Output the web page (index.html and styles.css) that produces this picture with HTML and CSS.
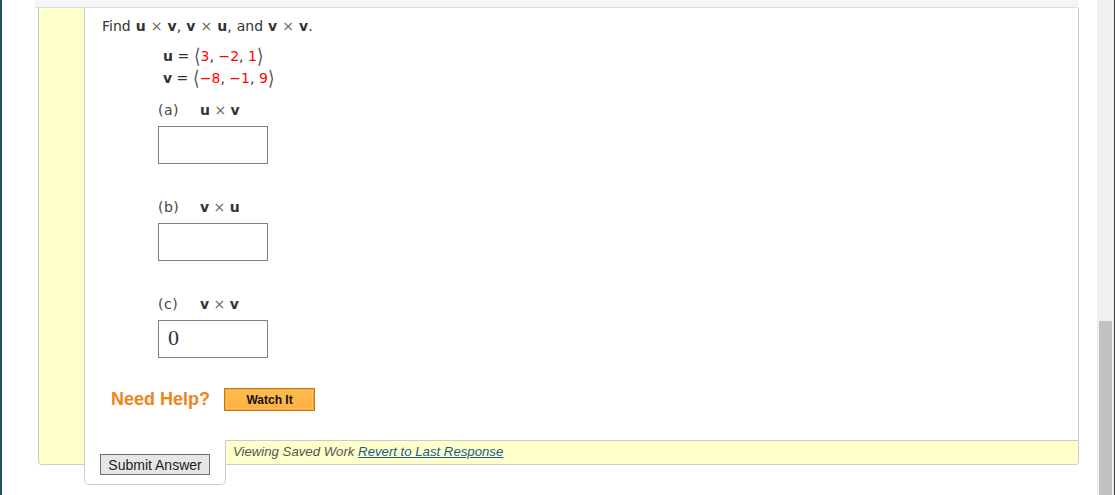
FILE: index.html
```html
<!DOCTYPE html>
<html>
<head>
<meta charset="utf-8">
<link rel="stylesheet" href="styles.css">
</head>
<body>
<div class="edge"></div>
<div class="page">
  <div class="prev-question"></div>
  <div class="question">
    <div class="gutter"></div>
    <div class="main">
      <div class="body">
        <p class="intro">Find <b>u</b> <span class="times">×</span> <b>v</b>, <b>v</b> <span class="times">×</span> <b>u</b>, and <b>v</b> <span class="times">×</span> <b>v</b>.</p>
        <div class="vectors">
          <div class="vec"><b>u</b> = <span class="ang">⟨</span><span class="num">3</span>, <span class="num">−2</span>, <span class="num">1</span><span class="ang">⟩</span></div>
          <div class="vec"><b>v</b> = <span class="ang">⟨</span><span class="num">−8</span>, <span class="num">−1</span>, <span class="num">9</span><span class="ang">⟩</span></div>
        </div>
        <div class="part">
          <div class="part-label"><span class="letter">(a)</span><span class="expr"><b>u</b> <span class="times">×</span> <b>v</b></span></div>
          <div class="answer"></div>
        </div>
        <div class="part">
          <div class="part-label"><span class="letter">(b)</span><span class="expr"><b>v</b> <span class="times">×</span> <b>u</b></span></div>
          <div class="answer"></div>
        </div>
        <div class="part part-last">
          <div class="part-label"><span class="letter">(c)</span><span class="expr"><b>v</b> <span class="times">×</span> <b>v</b></span></div>
          <div class="answer"><span class="value">0</span></div>
        </div>
        <div class="help">
          <span class="help-title">Need Help?</span>
          <span class="watch">Watch It</span>
        </div>
      </div>
      <div class="footer">
        <div class="submit-tab"><span class="submit">Submit Answer</span></div>
        <div class="status">Viewing Saved Work <a class="revert" href="#">Revert to Last Response</a></div>
      </div>
    </div>
  </div>
</div>
<div class="scrollbar"><div class="track-space"></div><div class="thumb"></div></div>
<div class="right-edge"></div>
</body>
</html>
```
FILE: styles.css
```css
html, body {
  margin: 0;
  padding: 0;
  height: 495px;
  overflow: hidden;
  background: #ffffff;
}
body {
  display: flex;
  font-family: "DejaVu Sans", Verdana, sans-serif;
  color: #333333;
}
.edge {
  width: 2px;
  background: #1d4e61;
  flex: none;
}
.right-edge {
  width: 1px;
  background: #3a3a3a;
  flex: none;
}
.page {
  flex: 1;
  min-width: 0;
}
.prev-question {
  margin-left: 33px;
  width: 1043px;
  height: 7px;
  background: #f5f5f5;
  border-bottom: 1px solid #dddddd;
  box-sizing: content-box;
}
.question {
  margin-left: 36px;
  width: 1039px;
  display: flex;
  border: 1px solid #cccccc;
  border-top: none;
  border-radius: 0 0 4px 4px;
}
.gutter {
  width: 45px;
  flex: none;
  background: #ffffcc;
  border-right: 1px solid #cccccc;
  border-bottom-left-radius: 3px;
}
.main {
  flex: 1;
  display: flex;
  flex-direction: column;
}
.body {
  padding: 8px 0 29px 17px;
}
.intro {
  margin: 0;
  font-size: 14px;
  line-height: 20px;
  height: 20px;
  word-spacing: 0.6px;
}
b {
  font-weight: bold;
  color: #333333;
}
.times {
  color: #666666;
  font-size: 14px;
  line-height: 1;
}
.vectors {
  margin: 9px 0 0 61px;
  font-size: 14px;
}
.vec {
  height: 22px;
  line-height: 22px;
}
.num {
  color: #ff0000;
}
.ang {
  display: inline-block;
  color: #555555;
  font-size: 17px;
  line-height: 1;
  font-weight: 300;
  transform: scaleY(1.2);
  vertical-align: -1px;
}
.part {
  margin-left: 56px;
}
.vectors + .part {
  margin-top: 11px;
}
.part-label {
  display: flex;
  font-size: 14px;
  line-height: 20px;
  height: 20px;
}
.letter {
  width: 42px;
  color: #444444;
  letter-spacing: 0.5px;
}
.answer {
  margin-top: 6px;
  margin-bottom: 33px;
  width: 108px;
  height: 36px;
  border: 1px solid #808080;
  display: flex;
  align-items: center;
}
.part-last .answer {
  margin-bottom: 30px;
}
.value {
  font-family: "Liberation Serif", "Times New Roman", serif;
  font-size: 22px;
  line-height: 1;
  color: #333333;
  padding-left: 9px;
  padding-bottom: 3px;
}
.help {
  display: flex;
  align-items: center;
  margin-left: 9px;
  height: 23px;
}
.help-title {
  font-family: "Liberation Sans", Arial, sans-serif;
  font-weight: bold;
  font-size: 18px;
  color: #ef8518;
  margin-right: 14px;
}
.watch {
  box-sizing: border-box;
  width: 91px;
  height: 23px;
  border: 1px solid #c8771f;
  background: linear-gradient(#ffbb4d, #ffb13f);
  box-shadow: inset 0 0 0 1px #f2a53a, inset 0 0 0 2px #ffc65f;
  font-family: "Liberation Sans", Arial, sans-serif;
  font-weight: bold;
  font-size: 12px;
  color: #111111;
  display: flex;
  align-items: center;
  justify-content: center;
}
.footer {
  display: flex;
  align-items: flex-start;
}
.submit-tab {
  box-sizing: border-box;
  width: 142px;
  height: 45px;
  margin-left: -1px;
  margin-bottom: -21px;
  background: #ffffff;
  border: 1px solid #cccccc;
  border-top: none;
  border-radius: 0 0 5px 5px;
  padding: 14px 0 0 15px;
  position: relative;
}
.submit {
  box-sizing: border-box;
  display: inline-flex;
  align-items: center;
  justify-content: center;
  width: 110px;
  height: 21px;
  background: #e6e6e6;
  border: 1px solid #707070;
  font-family: "Liberation Sans", Arial, sans-serif;
  font-size: 14px;
  color: #222222;
}
.status {
  flex: 1;
  box-sizing: border-box;
  height: 24px;
  background: #ffffcc;
  border-top: 1px solid #cccccc;
  border-bottom-right-radius: 3px;
  padding-left: 7px;
  font-family: "Liberation Sans", Arial, sans-serif;
  font-style: italic;
  font-size: 13.2px;
  line-height: 22px;
  color: #555555;
}
.revert {
  color: #1b5c88;
  text-decoration: underline;
}
.scrollbar {
  width: 17px;
  flex: none;
  background: #f0f0f0;
  display: flex;
  flex-direction: column;
  align-items: center;
}
.track-space {
  height: 321px;
  flex: none;
}
.thumb {
  width: 13px;
  flex: 1;
  background: #c1c1c1;
}
```
